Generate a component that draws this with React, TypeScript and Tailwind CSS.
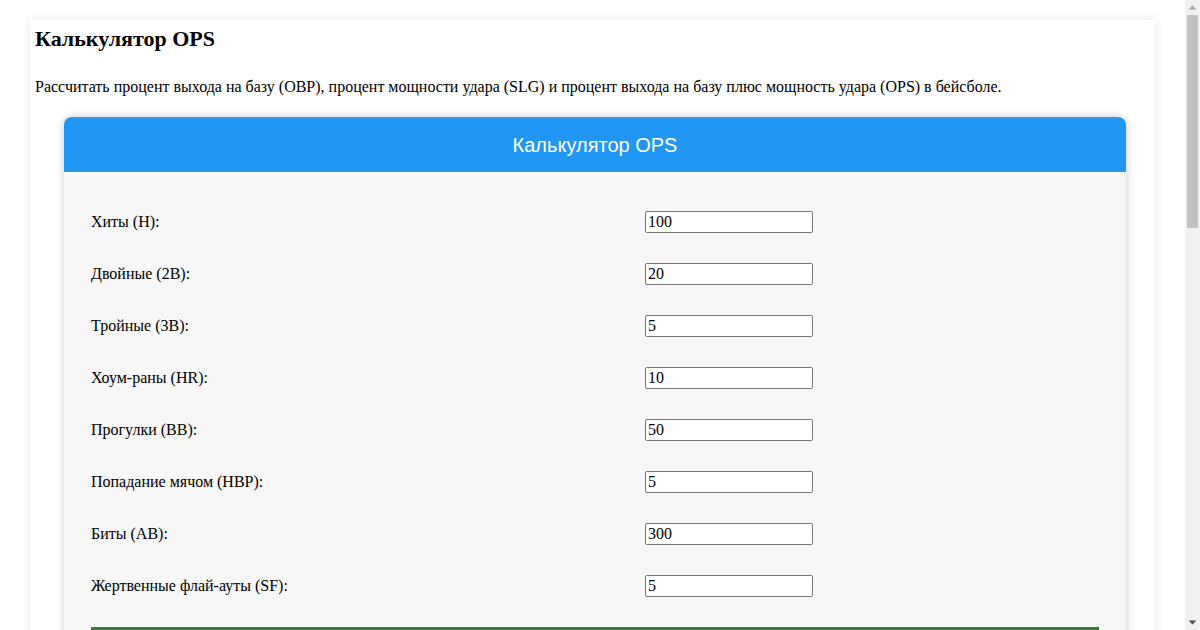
import { useState } from 'react'

const fields = [
  { key: 'h', label: 'Хиты (H):', value: '100' },
  { key: '2b', label: 'Двойные (2B):', value: '20' },
  { key: '3b', label: 'Тройные (3B):', value: '5' },
  { key: 'hr', label: 'Хоум-раны (HR):', value: '10' },
  { key: 'bb', label: 'Прогулки (BB):', value: '50' },
  { key: 'hbp', label: 'Попадание мячом (HBP):', value: '5' },
  { key: 'ab', label: 'Биты (AB):', value: '300' },
  { key: 'sf', label: 'Жертвенные флай-ауты (SF):', value: '5' },
]

function Scrollbar() {
  return (
    <div className="w-[15px] shrink-0 h-screen bg-[#f1f1f1] flex flex-col items-center">
      <svg width="15" height="15" viewBox="0 0 15 15" className="shrink-0">
        <path d="M3.5 9.5 L7.5 5.5 L11.5 9.5 Z" fill="#a3a3a3" />
      </svg>
      <div className="w-[11px] h-[213px] bg-[#c1c1c1]" />
      <div className="flex-1" />
      <svg width="15" height="15" viewBox="0 0 15 15" className="shrink-0">
        <path d="M3.5 5.5 L7.5 9.5 L11.5 5.5 Z" fill="#505050" />
      </svg>
    </div>
  )
}

export default function App() {
  const [values, setValues] = useState<Record<string, string>>(
    Object.fromEntries(fields.map((f) => [f.key, f.value]))
  )

  const n = (k: string) => parseFloat(values[k]) || 0
  const singles = n('h') - n('2b') - n('3b') - n('hr')
  const tb = singles + 2 * n('2b') + 3 * n('3b') + 4 * n('hr')
  const obpDen = n('ab') + n('bb') + n('hbp') + n('sf')
  const obp = obpDen ? (n('h') + n('bb') + n('hbp')) / obpDen : 0
  const slg = n('ab') ? tb / n('ab') : 0

  return (
    <div className="flex h-screen overflow-hidden bg-white font-['Liberation_Serif',serif] text-black">
      <div className="flex-1 h-screen overflow-hidden">
        <div className="mx-[30px] mt-[20px] px-[5px] pt-[6px] pb-[40px] bg-white shadow-[0_0_10px_rgba(0,0,0,0.1)]">
          <h1 className="text-[22px] font-bold leading-[26px]">Калькулятор OPS</h1>
          <p className="mt-[26px] text-base leading-[18px]">
            Рассчитать процент выхода на базу (OBP), процент мощности удара (SLG) и процент выхода на базу плюс мощность удара (OPS) в бейсболе.
          </p>

          <div className="ml-[29px] mt-[21px] w-[1062px] rounded-lg bg-[#f7f7f7] shadow-[0_0_8px_rgba(0,0,0,0.22)] overflow-hidden">
            <div className="h-[55px] flex items-center justify-center bg-[#2196f3] text-white text-[20px] font-['Liberation_Sans',Arial,sans-serif]">
              Калькулятор OPS
            </div>
            <div className="px-[27px] pt-[39px] pb-[30px]">
              {fields.map((f) => (
                <div key={f.key} className="flex items-center h-[22px] mb-[30px]">
                  <label className="w-[554px] text-base">{f.label}</label>
                  <input
                    type="number"
                    value={values[f.key]}
                    onChange={(e) => setValues({ ...values, [f.key]: e.target.value })}
                    className="w-[168px] h-[22px] px-[2px] bg-white border border-[#767676] rounded-[2px] text-base leading-[18px] font-['Liberation_Serif',serif] [appearance:textfield] [&::-webkit-inner-spin-button]:appearance-none"
                  />
                </div>
              ))}
              <button className="w-full h-[42px] bg-[#3a7e3a] text-white text-base font-['Liberation_Sans',Arial,sans-serif]">
                Рассчитать
              </button>

              <div className="mt-[30px] p-[20px] bg-white border border-[#ddd] rounded-[4px]">
                <h2 className="text-[20px] font-bold mb-[12px]">Результаты</h2>
                <p className="mb-[8px]">Процент выхода на базу (OBP): {obp.toFixed(3)}</p>
                <p className="mb-[8px]">Процент мощности удара (SLG): {slg.toFixed(3)}</p>
                <p>Процент выхода на базу плюс мощность удара (OPS): {(obp + slg).toFixed(3)}</p>
              </div>
            </div>
          </div>

          <div className="mt-[30px] space-y-[16px] leading-[22px]">
            <h2 className="text-[20px] font-bold">Как рассчитывается OPS</h2>
            <p>OBP = (H + BB + HBP) / (AB + BB + HBP + SF)</p>
            <p>SLG = (1B + 2 × 2B + 3 × 3B + 4 × HR) / AB</p>
            <p>OPS = OBP + SLG</p>
          </div>
        </div>
      </div>
      <Scrollbar />
    </div>
  )
}
